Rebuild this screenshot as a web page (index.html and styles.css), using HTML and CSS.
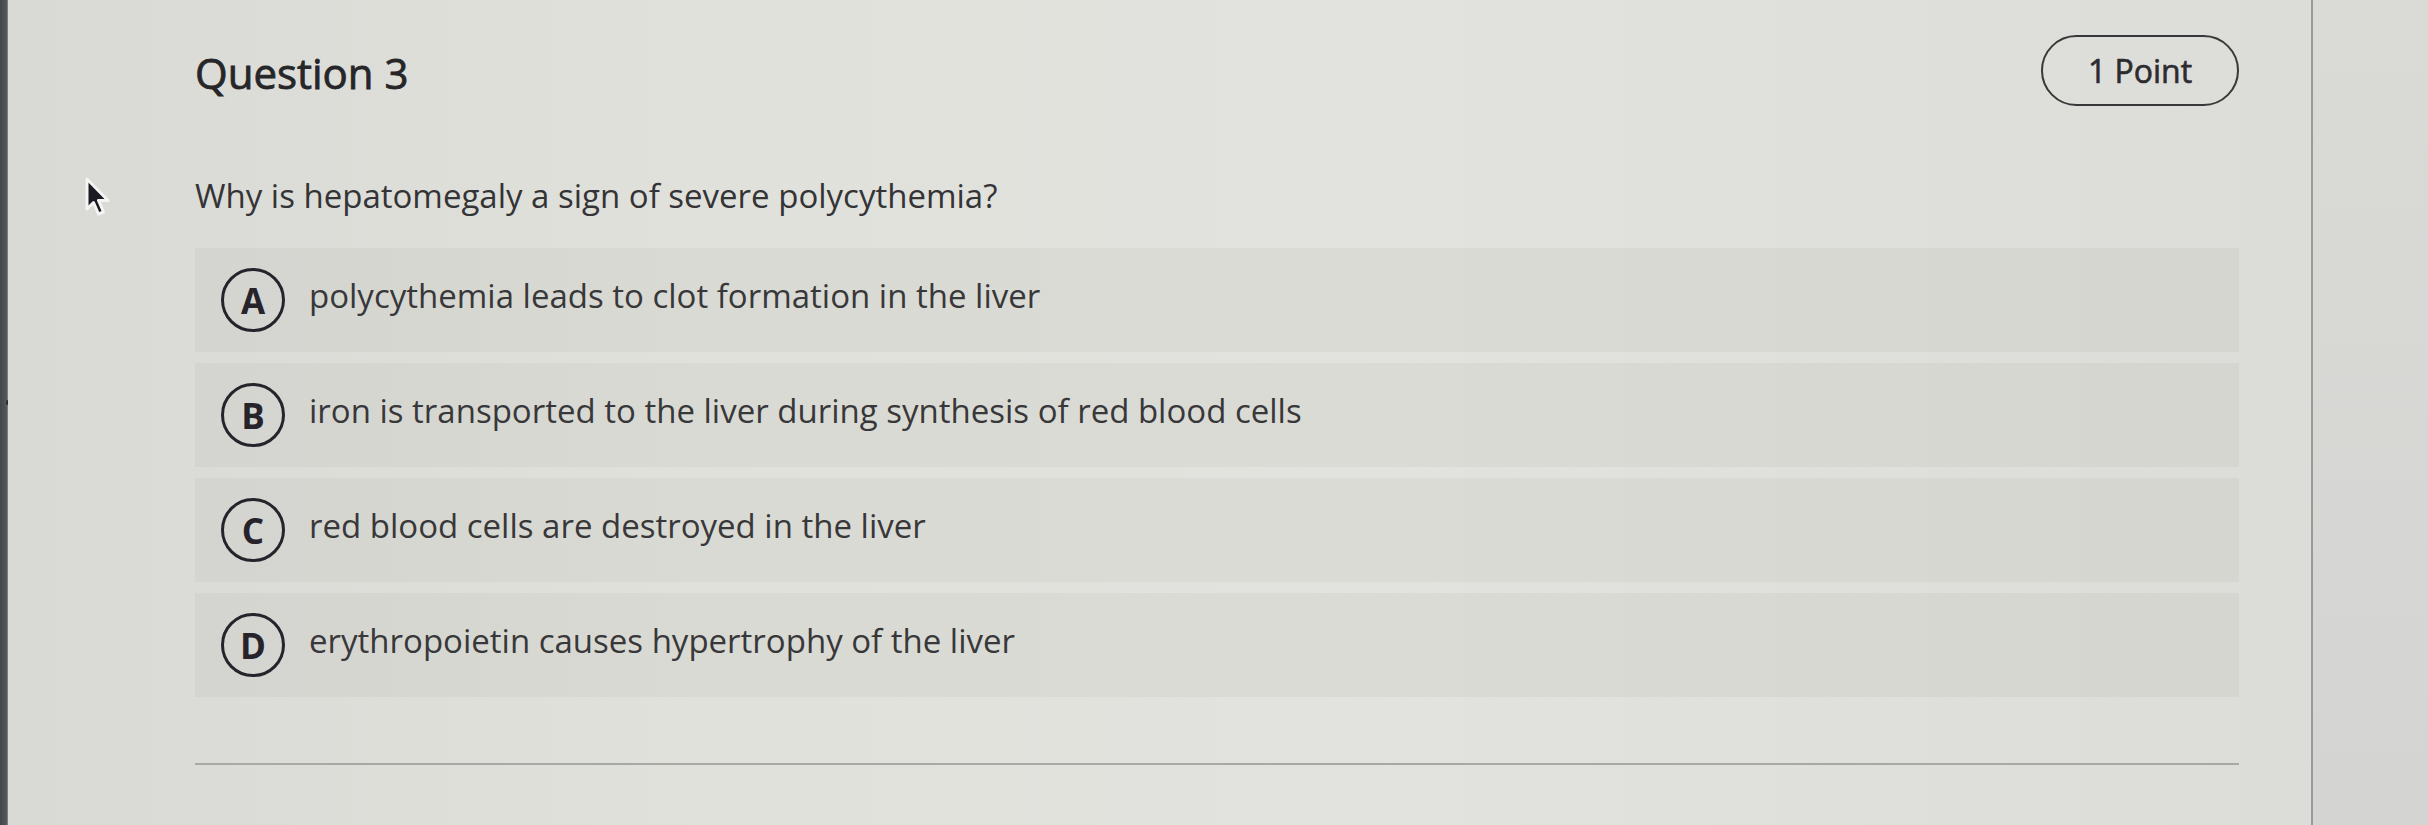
FILE: index.html
```html
<!DOCTYPE html>
<html lang="en">
<head>
<meta charset="utf-8">
<title>Question 3</title>
<link rel="stylesheet" href="styles.css">
</head>
<body>
<div class="screen">
  <div class="edge"><span class="edge-mark"></span></div>
  <main class="main">
    <svg class="cursor" width="32" height="42" viewBox="0 0 32 42" aria-hidden="true">
      <path d="M4 2 L4 32 L10.5 25.5 L15.5 37 L20.5 35 L15.5 23.5 L25 23.5 Z" fill="#1c1a22" stroke="#f4f4f4" stroke-width="3" stroke-linejoin="round"/>
    </svg>
    <div class="content">
      <header class="head">
        <h1 class="title">Question 3</h1>
        <span class="points">1 Point</span>
      </header>
      <p class="prompt">Why is hepatomegaly a sign of severe polycythemia?</p>
      <ul class="options">
        <li class="option"><span class="letter">A</span><span class="otext">polycythemia leads to clot formation in the liver</span></li>
        <li class="option"><span class="letter">B</span><span class="otext">iron is transported to the liver during synthesis of red blood cells</span></li>
        <li class="option"><span class="letter">C</span><span class="otext">red blood cells are destroyed in the liver</span></li>
        <li class="option"><span class="letter">D</span><span class="otext">erythropoietin causes hypertrophy of the liver</span></li>
      </ul>
      <hr class="rule">
    </div>
  </main>
  <div class="divider"></div>
  <aside class="side"></aside>
</div>
</body>
</html>
```

FILE: styles.css
```css
html, body {
  margin: 0;
  padding: 0;
}
body {
  width: 2428px;
  height: 825px;
  overflow: hidden;
  font-family: "Open Sans", "Noto Sans", sans-serif;
  background: #dcdcd8;
}
.screen {
  display: flex;
  width: 2428px;
  height: 825px;
  background: linear-gradient(180deg, #e0e0dc 0%, #dddeda 45%, #d4d4d1 100%);
}
.edge {
  width: 8px;
  flex: none;
  background: linear-gradient(90deg, #41464a 0%, #50565a 80%, #8a8c8c 100%);
  position: relative;
}
.edge-mark {
  position: absolute;
  left: 6px;
  top: 400px;
  width: 7px;
  height: 5px;
  border-radius: 2px;
  background: #2a2d30;
}
.main {
  flex: none;
  width: 2303px;
  position: relative;
  background: linear-gradient(90deg, #d9d9d5 0%, #e1e1dc 30%, #e2e2de 60%, #dcdcd8 100%);
}
.cursor {
  position: absolute;
  left: 75px;
  top: 177px;
}
.content {
  margin-left: 187px;
  width: 2044px;
  padding-top: 35px;
}
.head {
  display: flex;
  justify-content: space-between;
  align-items: center;
  height: 71px;
}
.title {
  margin: 0;
  font-size: 42px;
  font-weight: 400;
  -webkit-text-stroke: 0.8px #262628;
  color: #262628;
  line-height: 1;
  position: relative;
  top: 2px;
}
.points {
  box-sizing: border-box;
  height: 71px;
  width: 198px;
  display: flex;
  align-items: center;
  justify-content: center;
  border: 2px solid #38383a;
  border-radius: 36px;
  font-size: 32px;
  font-weight: 400;
  -webkit-text-stroke: 0.6px #2c2c2e;
  color: #2c2c2e;
}
.prompt {
  margin: 67px 0 0;
  font-size: 33px;
  line-height: 46px;
  color: #343436;
}
.options {
  list-style: none;
  margin: 29px 0 0;
  padding: 0;
  display: flex;
  flex-direction: column;
  gap: 11px;
}
.option {
  height: 104px;
  display: flex;
  align-items: center;
  padding-left: 26px;
  background: rgba(160, 160, 150, 0.1);
}
.letter {
  box-sizing: border-box;
  width: 64px;
  height: 64px;
  flex: none;
  border: 3.5px solid #26232b;
  border-radius: 50%;
  display: flex;
  align-items: center;
  justify-content: center;
  font-size: 35px;
  font-weight: 700;
  color: #26232b;
}
.otext {
  margin-left: 24px;
  font-size: 33px;
  color: #38383a;
  position: relative;
  top: -5px;
}
.rule {
  margin: 66px 0 0;
  border: none;
  height: 2px;
  background: #a8a8a6;
}
.divider {
  width: 2px;
  flex: none;
  background: #9a9a9a;
}
.side {
  flex: 1;
  background: linear-gradient(180deg, #dadad7 0%, #d4d5d2 100%);
}
```
